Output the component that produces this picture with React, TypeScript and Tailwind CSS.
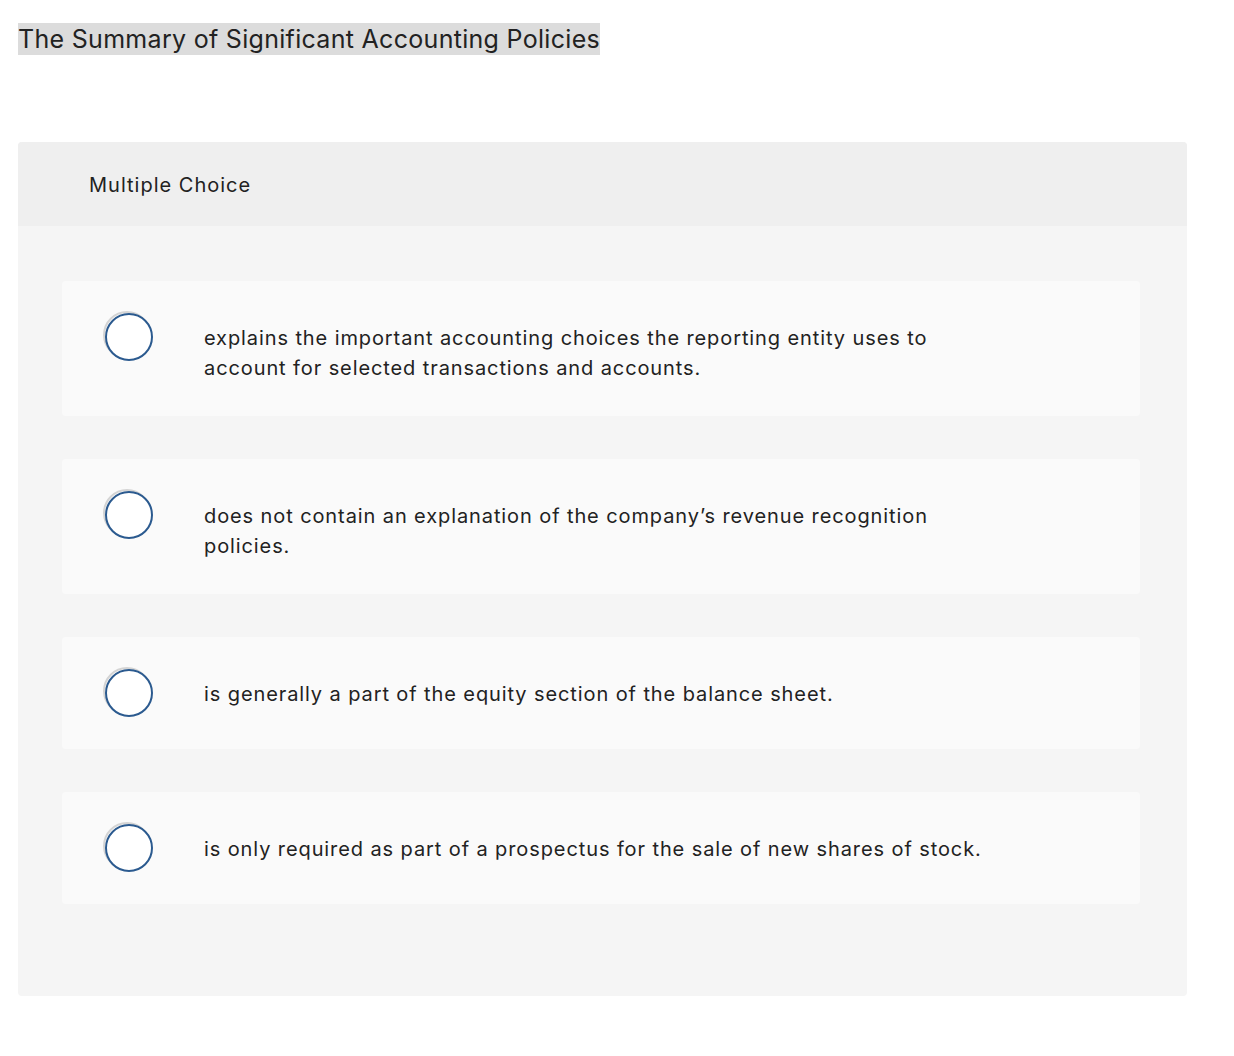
import React from 'react'

const options = [
  'explains the important accounting choices the reporting entity uses to account for selected transactions and accounts.',
  'does not contain an explanation of the company\u2019s revenue recognition policies.',
  'is generally a part of the equity section of the balance sheet.',
  'is only required as part of a prospectus for the sale of new shares of stock.',
]

function Radio() {
  return (
    <span className="relative block w-12 h-12 shrink-0">
      {/* faint shadow arc peeking out top-left */}
      <span className="absolute -left-[2px] -top-[2px] w-12 h-12 rounded-full border-2 border-[#d4d4d4]" />
      <span className="absolute inset-0 rounded-full border-2 border-[#2b5a8f] bg-white" />
    </span>
  )
}

export default function App() {
  return (
    <div className="min-h-[1056px] bg-white text-[#222] font-['Inter','Liberation_Sans',sans-serif]">
      <div className="pt-[23px] pl-[18px]">
        <h1 className="inline-block bg-[#dcdcdc] text-[25px] leading-[32px] tracking-[0.3px] font-normal">
          The Summary of Significant Accounting Policies
        </h1>
      </div>

      {/* Question card */}
      <div className="ml-[18px] mt-[87px] w-[1169px] rounded-[4px] bg-[#f5f5f5] overflow-hidden">
        <div className="h-[84px] bg-[#efefef] pl-[71px] flex items-center">
          <span className="text-[20px] leading-[24px] tracking-[1px] pt-[2px]">Multiple Choice</span>
        </div>

        <div className="pt-[55px] pb-[92px] pl-[44px] flex flex-col gap-[43px]">
          {options.map((text, i) => (
            <label
              key={i}
              className="w-[1078px] rounded-[4px] bg-[#fafafa] flex items-start pl-[43px] py-[32px] cursor-pointer"
            >
              <Radio />
              <span className="ml-[51px] pt-[10px] pb-[1px] max-w-[795px] text-[20px] leading-[30px] tracking-[0.9px]">
                {text}
              </span>
            </label>
          ))}
        </div>
      </div>
    </div>
  )
}
